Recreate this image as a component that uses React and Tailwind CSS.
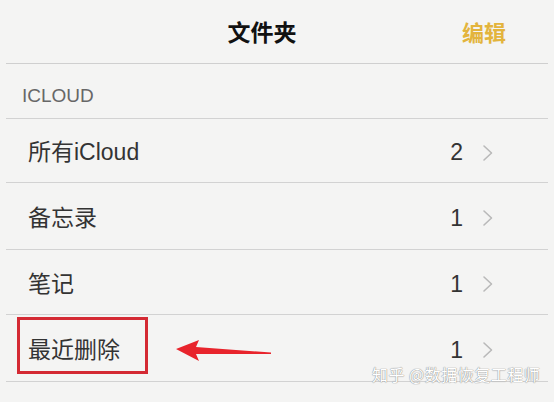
import React from 'react';

const ROWS = [
    { name: '所有iCloud', count: 2, h: 'h-[64px]' },
    { name: '备忘录', count: 1, h: 'h-[67px]' },
    { name: '笔记', count: 1, h: 'h-[65px]' },
];

const Chevron = () => (
    <svg width="12" height="18" viewBox="0 0 12 18" className="ml-[19px]">
        <polyline points="2,2 9.5,9 2,16" fill="none" stroke="#b9b9b9" strokeWidth="1.6" strokeLinecap="round" strokeLinejoin="round" />
    </svg>
);

const Row = ({ name, count, h, children }) => (
    <div className={`relative flex items-center ${h} pl-[22px] pr-[54px] pt-[4px] border-b border-[#d2d2d2] mx-[6px]`}>
        <span className="relative text-[23px] text-[#333] leading-none">{name}</span>
        <span className="ml-auto text-[23px] text-[#333] leading-none">{count}</span>
        <Chevron />
        {children}
    </div>
);

export default function App() {
    return (
        <div className="w-[554px] h-[402px] overflow-hidden bg-[#f4f4f3] font-['Liberation_Sans','Noto_Sans_CJK_SC',sans-serif] relative">
            <div className="relative flex items-center justify-center h-[64px] pr-[30px] pt-[4px] border-b border-[#cfcfcf] mx-[6px]">
                <span className="text-[23px] font-bold text-[#111] leading-none">文件夹</span>
                <span className="absolute right-[42px] text-[22px] font-bold text-[#e3b43c] leading-none">编辑</span>
            </div>
            <div className="flex items-center h-[55px] pl-[16px] pt-[8px] border-b border-[#d2d2d2] mx-[6px]">
                <span className="text-[19px] text-[#676767] leading-none">ICLOUD</span>
            </div>
            {ROWS.map(r => <Row key={r.name} {...r} />)}
            <Row name="最近删除" count={1} h="h-[67px]">
                <div className="absolute left-[11px] top-[2px] w-[131px] h-[57px] border-[3px] border-[#d42a33]" />
                <svg className="absolute left-[164px] top-[21px]" width="104" height="30" viewBox="0 0 104 30">
                    <path d="M6 13 L29 4 L26 11 L101 16.5 L101 18 L26 18 L29 25 Z" fill="#e8242c" />
                </svg>
            </Row>
            <div className="absolute left-[372px] top-[366px] text-[16px] leading-none text-white tracking-[0.5px] font-['Noto_Sans_CJK_SC',sans-serif] [text-shadow:0_0_1px_#8a8a8a,0_0_1px_#8a8a8a]">
                知乎 @数据恢复工程师
            </div>
        </div>
    );
}
